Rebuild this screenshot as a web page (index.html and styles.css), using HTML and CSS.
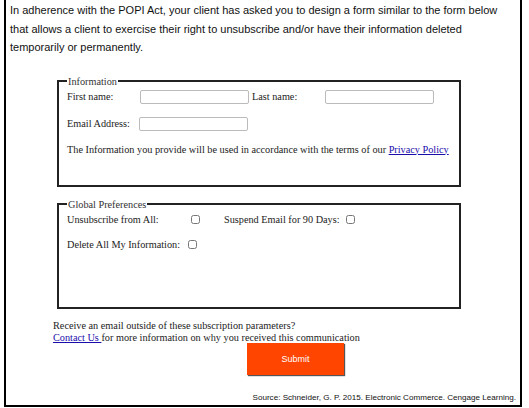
FILE: index.html
```html
<!DOCTYPE html>
<html>
<head>
 <meta charset="UTF-8">
 <title>POPI Form</title>
 <link rel="stylesheet" href="styles.css">
</head>
<body>
<div class="page">
  <p class="intro">In adherence with the POPI Act, your client has asked you to design a form similar to the form below that allows a client to exercise their right to unsubscribe and/or have their information deleted temporarily or permanently.</p>

  <form class="form">
    <fieldset class="box info">
      <legend>Information</legend>
      <div class="row">
        <label class="lbl-first">First name:</label>
        <input type="text" class="txt">
        <label class="lbl-last">Last name:</label>
        <input type="text" class="txt">
      </div>
      <div class="row">
        <label class="lbl-email">Email Address:</label>
        <input type="text" class="txt">
      </div>
      <p class="note">The Information you provide will be used in accordance with the terms of our <a href="#">Privacy Policy</a></p>
    </fieldset>

    <fieldset class="box prefs">
      <legend>Global Preferences</legend>
      <div class="row">
        <label class="lbl-unsub">Unsubscribe from All:</label>
        <input type="checkbox" class="chk">
        <label class="lbl-suspend">Suspend Email for 90 Days:</label>
        <input type="checkbox" class="chk">
      </div>
      <div class="row">
        <label class="lbl-delete">Delete All My Information:</label>
        <input type="checkbox" class="chk">
      </div>
    </fieldset>

    <div class="contact">
      Receive an email outside of these subscription parameters?<br>
      <a href="#">Contact Us </a>for more information on why you received this communication
    </div>
    <div class="actions">
      <button type="button" class="submit">Submit</button>
    </div>
  </form>

  <div class="source">Source: Schneider, G. P. 2015. Electronic Commerce. Cengage Learning.</div>
</div>
</body>
</html>
```

FILE: styles.css
```css
body {
  margin: 0;
  background: #fff;
}
.page {
  margin: 0 7px 0 4px;
  height: 405px;
  border: 2px solid #000;
  border-top: none;
  font-family: "Liberation Serif", serif;
  font-size: 10.25px;
  color: #222;
}
.intro {
  margin: 0;
  padding: 1px 4px 0 4px;
  font-family: "Liberation Sans", Arial, sans-serif;
  font-size: 11px;
  line-height: 18.5px;
  color: #111;
}
.form {
  margin: 19px 0 0 51px;
  width: 404px;
}
.box {
  box-sizing: border-box;
  width: 404px;
  min-width: 0;
  margin: 0;
  border: 2px solid #222;
  padding: 0 8px;
}
.box legend {
  padding: 0 1px;
  font-size: 10.25px;
  color: #333;
}
.info {
  height: 111px;
}
.prefs {
  margin-top: 12px;
  height: 110px;
}
.row {
  display: flex;
  align-items: center;
  height: 14px;
  margin-top: 3px;
  white-space: nowrap;
}
.row + .row {
  margin-top: 13px;
}
.prefs .row {
  margin-top: 3px;
}
.prefs .row + .row {
  margin-top: 11px;
}
.row label {
  flex-shrink: 0;
}
.note {
  margin: 13px 0 0;
  white-space: nowrap;
}
.txt {
  box-sizing: border-box;
  height: 14px;
  width: 109px;
  margin: 0;
  padding: 0 2px;
  border: 1px solid #bbb;
  border-radius: 2px;
  font-size: 10px;
}
.lbl-first { width: 73px; }
.lbl-last { width: 73px; margin-left: 3px; }
.lbl-email { width: 72px; }
.lbl-unsub { width: 124px; }
.lbl-suspend { margin-left: 24px; width: 122px; }
.lbl-delete { width: 121px; }
.chk {
  flex-shrink: 0;
  width: 9px;
  height: 9px;
  margin: 0;
}
.note a, .contact a {
  color: #1a0dab;
}
.contact {
  margin: 11px 0 0 -4px;
  line-height: 12px;
}
.actions {
  margin: -1px 0 0 190px;
}
.submit {
  width: 97px;
  height: 32px;
  border: none;
  background: #ff4500;
  color: #fff;
  font-family: "Liberation Sans", Arial, sans-serif;
  font-size: 9px;
  box-shadow: 1px 1px 1px #555;
}
.source {
  margin-top: 18px;
  padding-right: 4px;
  text-align: right;
  font-family: "Liberation Sans", Arial, sans-serif;
  font-size: 8.1px;
  color: #111;
}
```
